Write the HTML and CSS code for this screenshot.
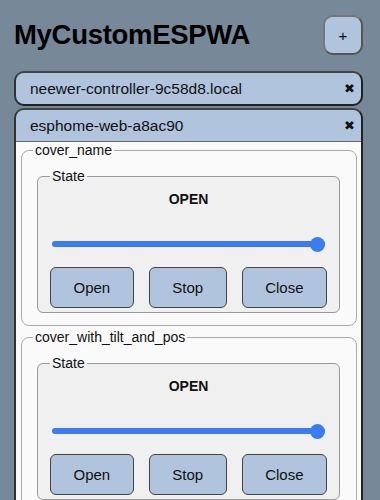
FILE: index.html
```html
<!DOCTYPE html>
<html lang="en">
<head>
    <meta charset="UTF-8">
    <meta name="viewport" content="width=device-width, initial-scale=1.0">
    <title>MyCustomESPWA</title>
    <link rel="stylesheet" href="styles.css">
</head>
<body>
    <div class="header">
        <h1 class="title">MyCustomESPWA</h1>
        <button class="add-btn">+</button>
    </div>

    <div class="devices">
        <div class="device">
            <div class="device-head">
                <span class="device-name">neewer-controller-9c58d8.local</span>
                <span class="remove">&#10006;</span>
            </div>
        </div>

        <div class="device">
            <div class="device-head">
                <span class="device-name">esphome-web-a8ac90</span>
                <span class="remove">&#10006;</span>
            </div>
            <div class="device-body">
                <fieldset class="entity">
                    <legend>cover_name</legend>
                    <fieldset class="state">
                        <legend>State</legend>
                        <div class="state-value">OPEN</div>
                        <input class="position" type="range" min="0" max="100" value="100">
                        <div class="actions">
                            <button class="action">Open</button>
                            <button class="action">Stop</button>
                            <button class="action">Close</button>
                        </div>
                    </fieldset>
                </fieldset>

                <fieldset class="entity">
                    <legend>cover_with_tilt_and_pos</legend>
                    <fieldset class="state">
                        <legend>State</legend>
                        <div class="state-value">OPEN</div>
                        <input class="position" type="range" min="0" max="100" value="100">
                        <div class="actions">
                            <button class="action">Open</button>
                            <button class="action">Stop</button>
                            <button class="action">Close</button>
                        </div>
                    </fieldset>
                </fieldset>
            </div>
        </div>
    </div>
</body>
</html>
```

FILE: styles.css
```css
*
{
    margin: 0;
    padding: 0;
    box-sizing: border-box;
}

body
{
    background-color: #778899;
    font-family: "Liberation Sans", Arial, sans-serif;
    color: #111;
    padding: 15px 17px 0 14px;
    overflow: hidden;
    height: 500px;
}

/* Header */
.header
{
    display: flex;
    justify-content: space-between;
    align-items: center;
}

.title
{
    font-size: 27.5px;
    font-weight: bold;
    letter-spacing: -0.3px;
    color: #000;
}

.add-btn
{
    width: 40px;
    height: 40px;
    border-radius: 10px;
    border: 2px solid #555;
    border-top-color: #777;
    border-left-color: #777;
    background-color: #b0c4de;
    font-size: 15px;
    font-family: inherit;
    color: #000;
}

/* Devices */
.devices
{
    margin-top: 16px;
    display: flex;
    flex-direction: column;
    gap: 2px;
}

.device
{
    border: 2px solid #222;
    border-top-color: #444;
    border-left-color: #333;
    border-radius: 10px;
    overflow: hidden;
    background-color: #b0c4de;
}

.device-head
{
    height: 31px;
    display: flex;
    align-items: center;
    justify-content: space-between;
    padding: 0 6px 0 14px;
    font-size: 15.5px;
}

.remove
{
    font-size: 13px;
    color: #111;
}

.device-body
{
    background-color: #fafafa;
    border-top: 1px solid #666;
    padding: 0 4px 20px 5px;
    display: flex;
    flex-direction: column;
    gap: 3px;
}

/* Entities */
.entity
{
    border: 1px solid #aaa;
    border-radius: 8px;
    padding: 10px 16px 12px 15px;
    font-size: 14px;
}

.entity > legend
{
    padding: 0 2px;
    margin-left: -4px;
    font-size: 14px;
}

.state
{
    border: 1px solid #999;
    border-radius: 6px;
    background-color: #f0f0f0;
    padding: 7px 12px 4px 12px;
}

.state > legend
{
    padding: 0 2px;
    font-size: 14px;
}

.state-value
{
    text-align: center;
    font-weight: bold;
    font-size: 14px;
    height: 24px;
}

.position
{
    -webkit-appearance: none;
    appearance: none;
    display: block;
    width: calc(100% - 4px);
    height: 16px;
    margin: 21px 2px 15px 2px;
    background: transparent;
}

.position::-webkit-slider-runnable-track
{
    height: 6px;
    border-radius: 3px;
    background-color: #3b7cf0;
}

.position::-webkit-slider-thumb
{
    -webkit-appearance: none;
    width: 15px;
    height: 15px;
    border-radius: 50%;
    background-color: #3b7cf0;
    margin-top: -4.5px;
}

.actions
{
    display: flex;
    gap: 15px;
}

.action
{
    flex: auto;
    height: 41px;
    border: 1.5px solid #444;
    border-radius: 6px;
    background-color: #b0c4de;
    font-family: inherit;
    font-size: 15px;
    color: #111;
}
```
